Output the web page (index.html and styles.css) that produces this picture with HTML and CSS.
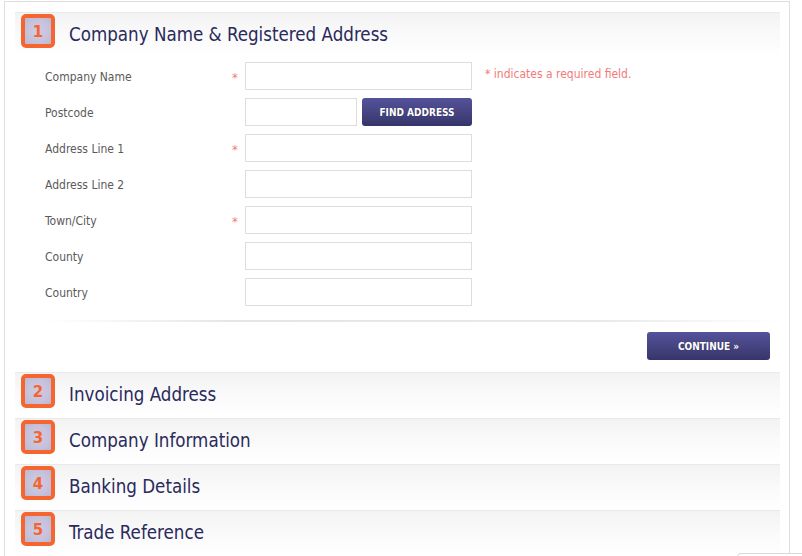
FILE: index.html
```html
<!DOCTYPE html>
<html lang="en">
<head>
<meta charset="utf-8">
<title>Application</title>
<link rel="stylesheet" href="styles.css">
</head>
<body>
<div class="page">
  <section class="step open">
    <div class="step-head">
      <span class="badge">1</span>
      <h2 class="step-title">Company Name &amp; Registered Address</h2>
    </div>
    <div class="step-body">
      <div class="fields">
        <div class="row">
          <label class="label">Company Name</label>
          <span class="star">*</span>
          <input class="field" type="text">
          <span class="note">* indicates a required field.</span>
        </div>
        <div class="row">
          <label class="label">Postcode</label>
          <span class="star"></span>
          <input class="field short" type="text">
          <button class="btn find">FIND ADDRESS</button>
        </div>
        <div class="row">
          <label class="label">Address Line 1</label>
          <span class="star">*</span>
          <input class="field" type="text">
        </div>
        <div class="row">
          <label class="label">Address Line 2</label>
          <span class="star"></span>
          <input class="field" type="text">
        </div>
        <div class="row">
          <label class="label">Town/City</label>
          <span class="star">*</span>
          <input class="field" type="text">
        </div>
        <div class="row">
          <label class="label">County</label>
          <span class="star"></span>
          <input class="field" type="text">
        </div>
        <div class="row">
          <label class="label">Country</label>
          <span class="star"></span>
          <input class="field" type="text">
        </div>
      </div>
      <div class="separator"></div>
      <div class="actions">
        <button class="btn continue">CONTINUE &raquo;</button>
      </div>
    </div>
  </section>
  <section class="step">
    <div class="step-head">
      <span class="badge">2</span>
      <h2 class="step-title">Invoicing Address</h2>
    </div>
  </section>
  <section class="step">
    <div class="step-head">
      <span class="badge">3</span>
      <h2 class="step-title">Company Information</h2>
    </div>
  </section>
  <section class="step">
    <div class="step-head">
      <span class="badge">4</span>
      <h2 class="step-title">Banking Details</h2>
    </div>
  </section>
  <section class="step">
    <div class="step-head">
      <span class="badge">5</span>
      <h2 class="step-title">Trade Reference</h2>
    </div>
  </section>
</div>
<div class="corner-popup"></div>
</body>
</html>
```

FILE: styles.css
```css
html, body {
  margin: 0;
  padding: 0;
  background: #ffffff;
  height: 100%;
  overflow: hidden;
}

body {
  font-family: "DejaVu Sans Condensed", "DejaVu Sans", Verdana, sans-serif;
  position: relative;
}

.page {
  margin: 1px 0 0 4px;
  width: 765px;
  min-height: 600px;
  border: 1px solid #dedede;
  border-bottom: none;
  padding: 10px 9px 0 10px;
  background: #fff;
}

.step-head {
  height: 44px;
  border-top: 1px solid #e9e9e9;
  background: linear-gradient(to bottom, #f3f3f3 0%, #fafafa 50%, #ffffff 100%);
  display: flex;
  align-items: flex-start;
  padding: 1px 0 0 6px;
}

.badge {
  width: 26px;
  height: 26px;
  border: 4px solid #f4652f;
  border-radius: 5px;
  background: radial-gradient(ellipse at center, #cfcbe4 0%, #c6c2dc 60%, #bbb6d3 100%);
  color: #f4652f;
  font-family: "DejaVu Sans", sans-serif;
  font-weight: bold;
  font-size: 15px;
  line-height: 29px;
  text-align: center;
  flex: none;
}

.step-title {
  margin: 9px 0 0 14px;
  font-size: 18.6px;
  font-weight: normal;
  color: #2a2a5c;
  line-height: 24px;
}

.step-body {
  padding: 4px 0 0 30px;
}

.fields {
  display: flex;
  flex-direction: column;
  gap: 8px;
}

.row {
  display: flex;
  align-items: center;
  height: 28px;
}

.label {
  width: 187px;
  flex: none;
  font-size: 12px;
  color: #5a5a5a;
  padding-top: 2px;
}

.star {
  width: 13px;
  flex: none;
  color: #f07a78;
  font-size: 13px;
  line-height: 13px;
  padding-top: 2px;
}

.field {
  width: 227px;
  height: 28px;
  box-sizing: border-box;
  border: 1px solid #dddddd;
  background: #fff;
  margin: 0;
  padding: 2px 5px;
  font-family: inherit;
  font-size: 12px;
  outline: none;
  flex: none;
}

.field.short {
  width: 112px;
}

.note {
  margin: 0 0 4px 13px;
  font-size: 12px;
  color: #f27a7a;
}

.btn {
  height: 28px;
  border: none;
  border-radius: 3px;
  background: linear-gradient(to bottom, #54529b 0%, #45437f 55%, #36356a 100%);
  color: #ffffff;
  font-family: "DejaVu Sans Condensed", "DejaVu Sans", sans-serif;
  font-weight: bold;
  font-size: 10px;
  padding: 0;
  text-shadow: 0 0 1px rgba(0,0,0,0.35);
  cursor: pointer;
}

.btn.find {
  width: 110px;
  margin-left: 5px;
}

.separator {
  height: 2px;
  margin-top: 14px;
  background: linear-gradient(to right, rgba(230,230,230,0) 0%, #e6e6e6 25%, #e8e8e8 75%, rgba(235,235,235,0) 100%);
}

.actions {
  display: flex;
  justify-content: flex-end;
  padding: 10px 10px 12px 0;
}

.btn.continue {
  width: 123px;
}

.corner-popup {
  position: absolute;
  left: 737px;
  top: 553px;
  width: 80px;
  height: 20px;
  border-top: 1px solid #d8d8d8;
  border-left: 1px solid #e0e0e0;
  border-radius: 4px 0 0 0;
  background: #fff;
}
```
